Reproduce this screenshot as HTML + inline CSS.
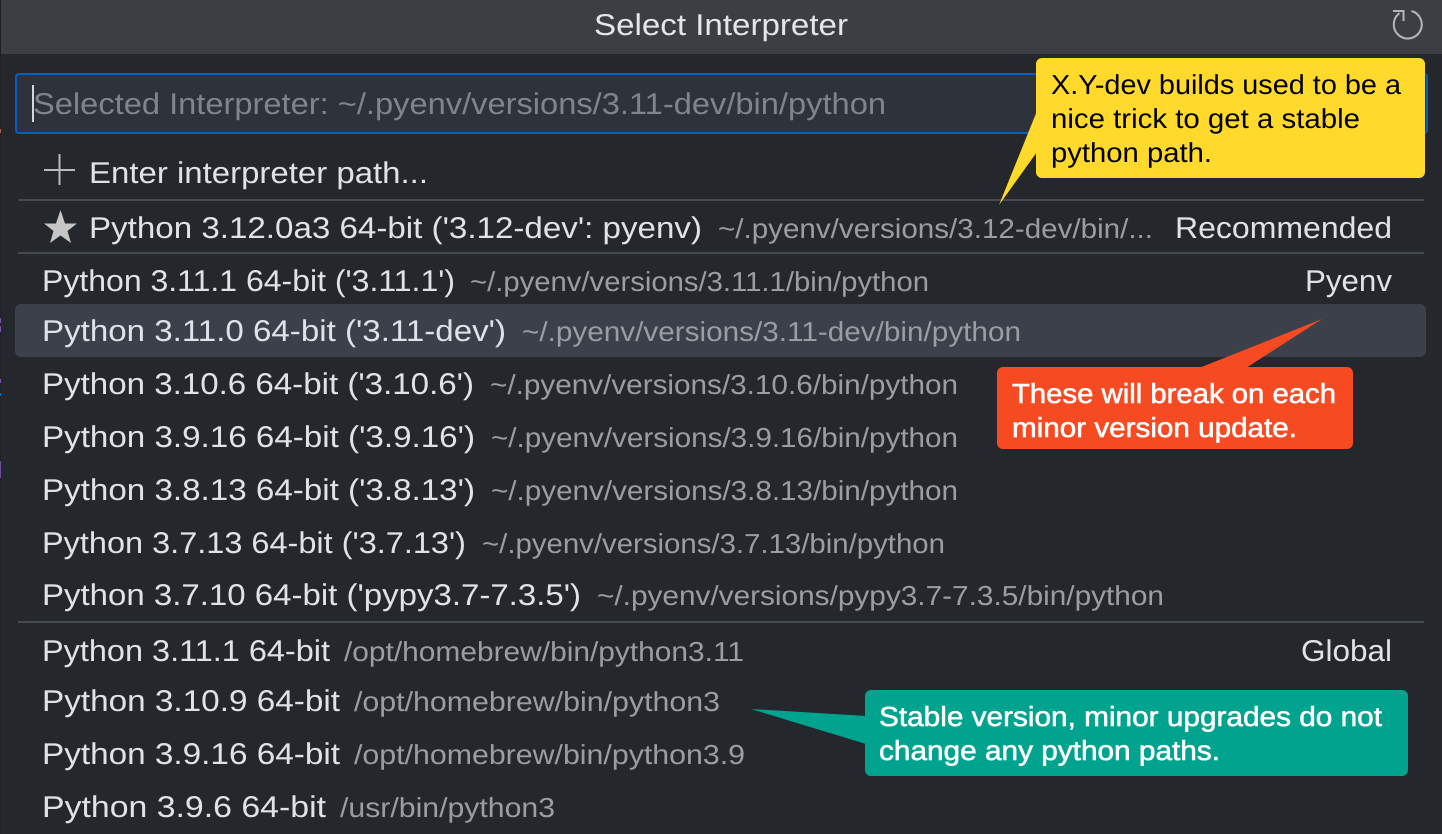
<!DOCTYPE html>
<html><head><meta charset="utf-8"><title>Select Interpreter</title>
<style>
html,body{margin:0;padding:0;background:#24272c;width:1442px;height:834px;overflow:hidden}
svg{display:block}
text{font-family:"Liberation Sans",sans-serif;white-space:pre}
.m{font-size:30px;fill:#dfe2e7}
.p{font-size:27.5px;fill:#9a9da2}
.c{font-size:27.5px;fill:#000}
.w{font-size:27.5px;fill:#fff;stroke:#fff;stroke-width:.55px}
</style></head><body>
<svg width="1442" height="834" viewBox="0 0 1442 834" xmlns="http://www.w3.org/2000/svg" text-rendering="geometricPrecision">
<rect width="1442" height="834" fill="#24272c"/>
<rect width="1442" height="54" fill="#3b3f44"/>
<rect x="0" y="0" width="1" height="834" fill="#1e2024"/>
<g>
<rect x="0" y="129" width="1" height="4" fill="#b5584a"/>
<rect x="0" y="318" width="1" height="5" fill="#7a52b0"/>
<rect x="0" y="326" width="1" height="6" fill="#7a52b0"/>
<rect x="0" y="379" width="1" height="4" fill="#7a52b0"/>
<rect x="0" y="393" width="1" height="3" fill="#0a6fc0"/>
<rect x="0" y="461" width="1" height="17" fill="#6a4f9c"/>
</g>
<text x="594" y="35" class="m" textLength="254" lengthAdjust="spacingAndGlyphs" style="fill:#e4e6e9">Select Interpreter</text>
<g fill="none" stroke="#b4b6b8" stroke-width="2">
<path d="M1411.500 11A14 14 0 1 1 1399.500 13.200"/>
<path d="M1393 11H1403.500V21"/>
</g>
<rect x="16" y="74" width="1411" height="59" rx="3" fill="#2d323b" stroke="#0060c8" stroke-width="2"/>
<rect x="32" y="85" width="2" height="37" fill="#d5d7da"/>
<text x="33" y="114" fill="#7f858d" textLength="853" lengthAdjust="spacingAndGlyphs" style="font-size:30px">Selected Interpreter: ~/.pyenv/versions/3.11-dev/bin/python</text>
<path d="M59.500 154V185M44 170H75" stroke="#b9bbbe" stroke-width="2" fill="none"/>
<text x="89" y="183" class="m" textLength="339" lengthAdjust="spacingAndGlyphs">Enter interpreter path...</text>
<rect x="18" y="199" width="1406" height="2" fill="#454a50"/>
<path d="M60.500 210L65 223.500H77L67.500 231L71 243L60.500 235.500L50 243L53.500 231L44 223.500H56Z" fill="#c6c6c6"/>
<text x="89" y="238" class="m" textLength="613" lengthAdjust="spacingAndGlyphs">Python 3.12.0a3 64-bit ('3.12-dev': pyenv)</text>
<text x="718" y="238" class="p" textLength="435" lengthAdjust="spacingAndGlyphs">~/.pyenv/versions/3.12-dev/bin/...</text>
<text x="1175" y="238" class="m" textLength="217" lengthAdjust="spacingAndGlyphs">Recommended</text>
<rect x="18" y="252" width="1406" height="2" fill="#454a50"/>
<text x="42" y="291" class="m" textLength="413" lengthAdjust="spacingAndGlyphs">Python 3.11.1 64-bit ('3.11.1')</text>
<text x="470" y="291" class="p" textLength="459" lengthAdjust="spacingAndGlyphs">~/.pyenv/versions/3.11.1/bin/python</text>
<text x="1305" y="291" class="m" textLength="87" lengthAdjust="spacingAndGlyphs">Pyenv</text>
<rect x="15" y="304" width="1411" height="53" rx="6" fill="#3b404b"/>
<text x="42" y="341" class="m" textLength="464" lengthAdjust="spacingAndGlyphs">Python 3.11.0 64-bit ('3.11-dev')</text>
<text x="522" y="341" class="p" textLength="499" lengthAdjust="spacingAndGlyphs">~/.pyenv/versions/3.11-dev/bin/python</text>
<text x="42" y="394" class="m" textLength="432" lengthAdjust="spacingAndGlyphs">Python 3.10.6 64-bit ('3.10.6')</text>
<text x="490" y="394" class="p" textLength="468" lengthAdjust="spacingAndGlyphs">~/.pyenv/versions/3.10.6/bin/python</text>
<text x="42" y="447" class="m" textLength="433" lengthAdjust="spacingAndGlyphs">Python 3.9.16 64-bit ('3.9.16')</text>
<text x="491" y="447" class="p" textLength="467" lengthAdjust="spacingAndGlyphs">~/.pyenv/versions/3.9.16/bin/python</text>
<text x="42" y="500" class="m" textLength="433" lengthAdjust="spacingAndGlyphs">Python 3.8.13 64-bit ('3.8.13')</text>
<text x="491" y="500" class="p" textLength="467" lengthAdjust="spacingAndGlyphs">~/.pyenv/versions/3.8.13/bin/python</text>
<text x="42" y="553" class="m" textLength="424" lengthAdjust="spacingAndGlyphs">Python 3.7.13 64-bit ('3.7.13')</text>
<text x="482" y="553" class="p" textLength="463" lengthAdjust="spacingAndGlyphs">~/.pyenv/versions/3.7.13/bin/python</text>
<text x="42" y="605" class="m" textLength="539" lengthAdjust="spacingAndGlyphs">Python 3.7.10 64-bit ('pypy3.7-7.3.5')</text>
<text x="597" y="605" class="p" textLength="567" lengthAdjust="spacingAndGlyphs">~/.pyenv/versions/pypy3.7-7.3.5/bin/python</text>
<rect x="18" y="621" width="1406" height="2" fill="#454a50"/>
<text x="42" y="661" class="m" textLength="288" lengthAdjust="spacingAndGlyphs">Python 3.11.1 64-bit</text>
<text x="344" y="661" class="p" textLength="400" lengthAdjust="spacingAndGlyphs">/opt/homebrew/bin/python3.11</text>
<text x="1301" y="661" class="m" textLength="91" lengthAdjust="spacingAndGlyphs">Global</text>
<text x="42" y="711" class="m" textLength="298" lengthAdjust="spacingAndGlyphs">Python 3.10.9 64-bit</text>
<text x="354" y="711" class="p" textLength="366" lengthAdjust="spacingAndGlyphs">/opt/homebrew/bin/python3</text>
<text x="42" y="764" class="m" textLength="298" lengthAdjust="spacingAndGlyphs">Python 3.9.16 64-bit</text>
<text x="354" y="764" class="p" textLength="391" lengthAdjust="spacingAndGlyphs">/opt/homebrew/bin/python3.9</text>
<text x="42" y="817" class="m" textLength="284" lengthAdjust="spacingAndGlyphs">Python 3.9.6 64-bit</text>
<text x="340" y="817" class="p" textLength="215" lengthAdjust="spacingAndGlyphs">/usr/bin/python3</text>

<path d="M1037 111L999 205L1037 152Z" fill="#ffd92b"/>
<rect x="1036" y="58" width="389" height="120" rx="6" fill="#ffd92b"/>
<text x="1051" y="94" class="c" textLength="350" lengthAdjust="spacingAndGlyphs">X.Y-dev builds used to be a</text>
<text x="1051" y="128" class="c" textLength="309" lengthAdjust="spacingAndGlyphs">nice trick to get a stable</text>
<text x="1051" y="162" class="c" textLength="161" lengthAdjust="spacingAndGlyphs">python path.</text>

<path d="M1199 368L1322 319L1246 368Z" fill="#f64a23"/>
<rect x="997" y="367" width="356" height="82" rx="6" fill="#f64a23"/>
<text x="1012" y="403" class="w" textLength="324" lengthAdjust="spacingAndGlyphs">These will break on each</text>
<text x="1012" y="437" class="w" textLength="285" lengthAdjust="spacingAndGlyphs">minor version update.</text>

<path d="M866 716L751 709L866 744Z" fill="#00a48e"/>
<rect x="865" y="690" width="543" height="86" rx="6" fill="#00a48e"/>
<text x="879" y="726" class="w" textLength="503" lengthAdjust="spacingAndGlyphs">Stable version, minor upgrades do not</text>
<text x="879" y="760" class="w" textLength="341" lengthAdjust="spacingAndGlyphs">change any python paths.</text>
</svg>
</body></html>
